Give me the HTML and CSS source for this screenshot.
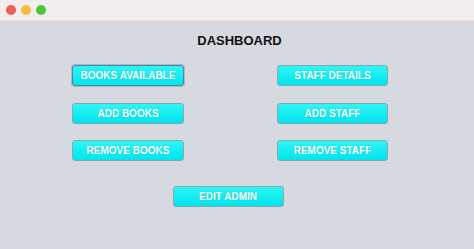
FILE: index.html
```html
<!DOCTYPE html>
<html lang="en">
<head>
    <meta charset="UTF-8">
    <title>Dashboard</title>
    <link rel="stylesheet" href="styles.css">
</head>
<body>
    <div class="window">
        <div class="titlebar">
            <span class="light red"></span>
            <span class="light yellow"></span>
            <span class="light green"></span>
        </div>

        <div class="content">
            <h1>DASHBOARD</h1>

            <div class="buttons">
                <button class="btn focused">BOOKS AVAILABLE</button>
                <button class="btn">STAFF DETAILS</button>
                <button class="btn">ADD BOOKS</button>
                <button class="btn">ADD STAFF</button>
                <button class="btn">REMOVE BOOKS</button>
                <button class="btn">REMOVE STAFF</button>
            </div>

            <div class="admin-row">
                <button class="btn">EDIT ADMIN</button>
            </div>
        </div>
    </div>
</body>
</html>
```

FILE: styles.css
```css
html, body {
    margin: 0;
    padding: 0;
    height: 100%;
}

body {
    font-family: "Liberation Sans", Arial, sans-serif;
    background-color: #d6d9e0;
}

.window {
    height: 100%;
    display: flex;
    flex-direction: column;
}

.titlebar {
    height: 21px;
    background-color: #f3eeee;
    border-bottom: 1px solid #e2dfe0;
    display: flex;
    align-items: center;
    gap: 5px;
    padding-left: 6px;
    box-sizing: border-box;
}

.light {
    width: 10px;
    height: 10px;
    border-radius: 50%;
}

.red { background-color: #ec5f55; }
.yellow { background-color: #f4bd3b; }
.green { background-color: #4fc43c; }

.content {
    flex: 1;
    padding-left: 72px;
    width: 316px;
}

h1 {
    margin: 12px 0 0 0;
    font-size: 13px;
    line-height: 15px;
    font-weight: bold;
    color: #111;
    text-align: center;
    padding-left: 19px;
}

.buttons {
    display: grid;
    grid-template-columns: 112px 111px;
    justify-content: space-between;
    row-gap: 16.5px;
    margin-top: 17px;
}

.btn {
    height: 21px;
    padding: 0;
    border: 1px solid #8aa6ae;
    border-radius: 3px;
    background: linear-gradient(#2ff5f5, #00e4ec);
    color: #fff;
    font-family: "Liberation Sans", Arial, sans-serif;
    font-size: 10px;
    font-weight: bold;
    text-shadow: 0 0 1px rgba(0, 90, 100, 0.35);
    cursor: pointer;
}

.btn.focused {
    border-color: #5f7f98;
    box-shadow: 0 0 0 1px rgba(90, 140, 170, 0.4);
}

.admin-row {
    display: flex;
    justify-content: center;
    margin-top: 24.5px;
    padding-right: 4px;
}

.admin-row .btn {
    width: 111px;
}
```
